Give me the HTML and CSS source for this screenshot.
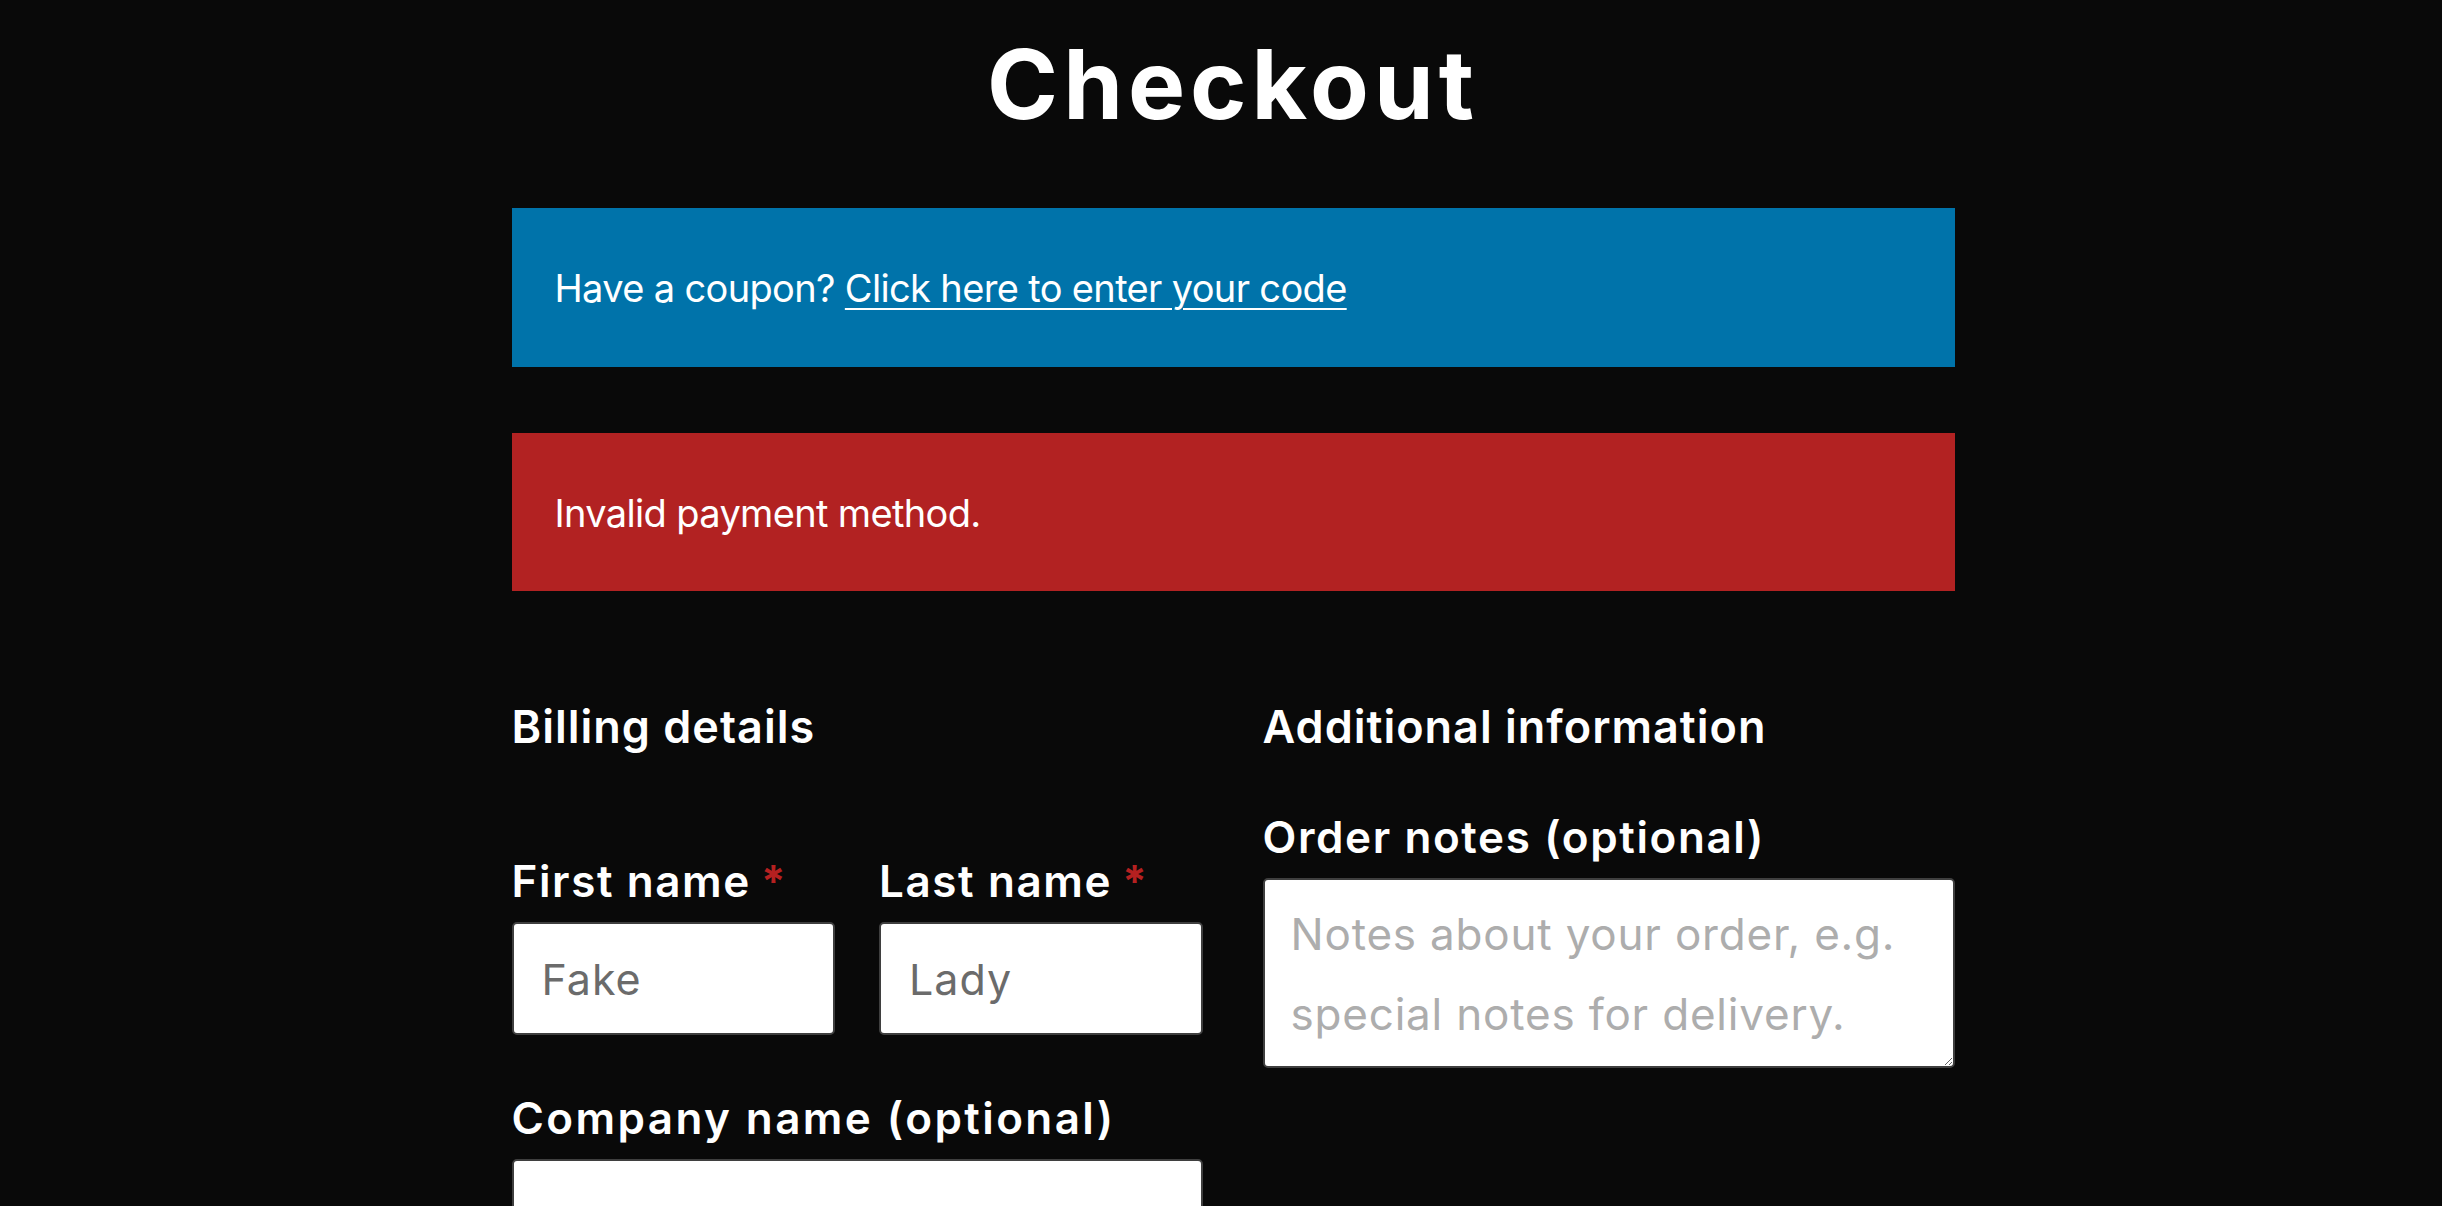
FILE: index.html
```html
<!DOCTYPE html>
<html lang="en">
<head>
<meta charset="utf-8">
<title>Checkout</title>
<link rel="stylesheet" href="styles.css">
</head>
<body>
<div class="page">
  <main class="container">
    <h1 class="title">Checkout</h1>

    <div class="notice notice-info">Have a coupon? <a href="#" class="notice-link">Click here to enter your code</a></div>
    <div class="notice notice-error">Invalid payment method.</div>

    <form class="checkout">
      <section class="col col-billing">
        <h3 class="col-title">Billing details</h3>
        <div class="row-split">
          <div class="field">
            <label class="field-label"><span class="label-text">First name</span><span class="req">*</span></label>
            <input class="field-input" type="text" value="Fake">
          </div>
          <div class="field">
            <label class="field-label"><span class="label-text">Last name</span><span class="req">*</span></label>
            <input class="field-input" type="text" value="Lady">
          </div>
        </div>
        <div class="field field-company">
          <label class="field-label field-label-wide">Company name (optional)</label>
          <input class="field-input" type="text">
        </div>
      </section>

      <section class="col col-additional">
        <h3 class="col-title">Additional information</h3>
        <div class="field field-notes">
          <label class="field-label">Order notes (optional)</label>
          <textarea class="field-textarea" placeholder="Notes about your order, e.g. special notes for delivery."></textarea>
        </div>
      </section>
    </form>
  </main>
</div>
</body>
</html>
```

FILE: styles.css
```css
html, body {
  margin: 0;
  padding: 0;
  background: #090909;
  color: #ffffff;
  font-family: "Inter", "Noto Sans", sans-serif;
}

.page {
  padding-left: 24px;
  height: 1206px;
  overflow: hidden;
}

.container {
  width: 1443px;
  margin: 0 auto;
}

.title {
  margin: 27px 0 0 0;
  font-size: 96px;
  line-height: 115px;
  font-weight: 700;
  letter-spacing: 5px;
  text-align: center;
  color: #ffffff;
}

.notice {
  font-size: 38px;
  line-height: 58px;
  font-weight: 400;
  letter-spacing: -0.65px;
  color: #ffffff;
  padding: 51px 43px 49px 43px;
}

.notice-info {
  margin-top: 66px;
  background: #0073aa;
  padding-bottom: 50px;
}

.notice-error {
  margin-top: 66px;
  background: #b22222;
}

.notice-link {
  color: #ffffff;
  text-decoration: underline;
  text-underline-offset: 6px;
  text-decoration-thickness: 2px;
}

.checkout {
  display: grid;
  grid-template-columns: 691px 692px;
  justify-content: space-between;
  margin-top: 107px;
}

.col-title {
  margin: 0;
  font-size: 45px;
  line-height: 58px;
  font-weight: 600;
  letter-spacing: 1px;
  color: #ffffff;
}

.row-split {
  display: flex;
  gap: 44px;
  margin-top: 97px;
}

.row-split .field {
  flex: 1;
  min-width: 0;
}

.field {
  display: flex;
  flex-direction: column;
}

.field-label {
  font-size: 44px;
  line-height: 56px;
  font-weight: 600;
  letter-spacing: 1.6px;
  margin-bottom: 13px;
  color: #ffffff;
  white-space: nowrap;
}

.field-label-wide {
  letter-spacing: 2.4px;
}

.req {
  color: #b52020;
  font-weight: 700;
  margin-left: 10px;
}

.field-input {
  box-sizing: border-box;
  width: 100%;
  height: 113px;
  margin: 0;
  border: 2px solid #3f3f3f;
  border-radius: 5px;
  background: #ffffff;
  padding: 0 28px;
  font-family: "Inter", "Noto Sans", sans-serif;
  font-size: 43px;
  letter-spacing: 1px;
  color: #6b6b6b;
  outline: none;
}

.field-company {
  margin-top: 55px;
}

.field-notes {
  margin-top: 53px;
}

.field-textarea {
  box-sizing: border-box;
  width: 100%;
  height: 190px;
  margin: 0;
  border: 2px solid #3f3f3f;
  border-radius: 5px;
  background: #ffffff;
  padding: 14px 26px;
  font-family: "Inter", "Noto Sans", sans-serif;
  font-size: 44px;
  line-height: 80px;
  letter-spacing: 0.8px;
  color: #333333;
  outline: none;
  overflow: hidden;
}

.field-textarea::placeholder {
  color: #adadad;
}
```
